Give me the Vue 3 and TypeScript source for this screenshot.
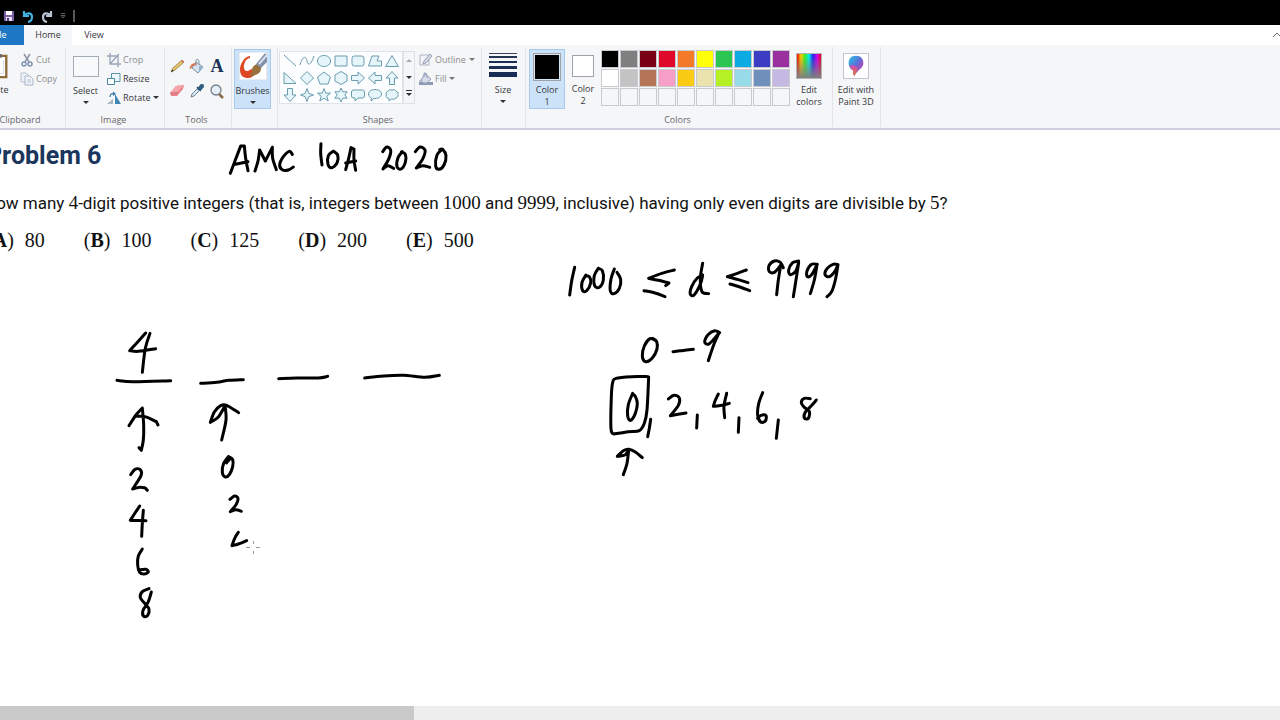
<script setup lang="ts">
import { ref } from 'vue'

interface InkSheet {
  x: number
  y: number
  strokes: string[]
}

const tabs = ['Home', 'View']
const activeTab = ref('Home')
const activeColor = ref(1)

const palette: string[] = [
  '#000000', '#7f7f7f', '#7a0016', '#e0082a', '#f37a28', '#ffff0a', '#2bc552', '#0cabe2', '#3d3dc4', '#9a309f',
  '#ffffff', '#c3c3c3', '#b37556', '#f79fc8', '#f9cb14', '#ebe3ae', '#b4f023', '#98dbe8', '#6f90ba', '#c5b8e3',
  '', '', '', '', '', '', '', '', '', '',
]

const shapes: string[] = [
  'M2 2L14 13',
  'M1 12C4 2 7 3 8 8S12 12 15 3',
  'M8 2.500C12 2.500 14.500 5 14.500 8S12 13.500 8 13.500 1.500 11 1.500 8 4 2.500 8 2.500Z',
  'M2 3H14V13H2Z',
  'M4.500 3H11.500Q14 3 14 5.500V10.500Q14 13 11.500 13H4.500Q2 13 2 10.500V5.500Q2 3 4.500 3Z',
  'M5 3H12L10 8H14.500V13H1.500Z',
  'M8 2.500L14.500 13.500H1.500Z',
  'M2 2.500L14 13.500H2Z',
  'M8 1.500L14.500 8L8 14.500L1.500 8Z',
  'M8 2L14.500 7L12 14H4L1.500 7Z',
  'M8 1.500L14 5V11L8 14.500L2 11V5Z',
  'M1.500 5.500H8V2L14.500 8L8 14V10.500H1.500Z',
  'M14.500 5.500H8V2L1.500 8L8 14V10.500H14.500Z',
  'M5.500 14.500V8H2L8 1.500L14 8H10.500V14.500Z',
  'M5.500 1.500V8H2L8 14.500L14 8H10.500V1.500Z',
  'M8 1.500L9.700 6.300L14.500 8L9.700 9.700L8 14.500L6.300 9.700L1.500 8L6.300 6.300Z',
  'M8 1.500L9.800 6.200H14.500L10.800 9.200L12.200 14L8 11.200L3.800 14L5.200 9.200L1.500 6.200H6.200Z',
  'M8 1L9.800 4.800H14.200L11.800 8L14.200 11.200H9.800L8 15L6.200 11.200H1.800L4.200 8L1.800 4.800H6.200Z',
  'M3.500 3H12.500Q14.500 3 14.500 5V9Q14.500 11 12.500 11H8L5 14V11H3.500Q1.500 11 1.500 9V5Q1.500 3 3.500 3Z',
  'M8 2.500C12 2.500 14.500 4.500 14.500 7S12 11.500 8 11.500L7 11.400L4 14L4.500 11C2.500 10 1.500 9 1.500 7 1.500 4.500 4 2.500 8 2.500Z',
  'M4 4Q5 2 8 3Q11 1.500 12 4Q15 5 14 7.500Q15 10 12 11Q10 13 7.500 12L5 14L5 11.500Q1.500 11 2.200 8Q1 5 4 4Z',
]

/* Pen strokes, three units to a pixel; "|" lifts or turns the pen. */
const ink: InkSheet[] = [
  {
    x: 0, y: 135,
    strokes: [
      '691,115 706,75 722,33|722,33 733,33|733,33 737,70 744,107|706,88 744,80',
      '765,108 774,78 779,45|779,45 796,78|796,78 817,37|817,37 818,70 829,104',
      '877,58 868,49 850,65 839,90 848,105 865,105 880,96',
      '963,26 962,55 966,90',
      '998,50 985,62 984,88 995,98 1011,84 1013,60 1000,48',
      '1037,104 1046,70 1053,38|1053,38 1062,42|1062,42 1062,75 1067,106|1037,84 1067,78',
      '1148,50 1160,36 1172,45 1167,70 1149,102|1149,102 1164,92 1181,100',
      '1207,50 1194,68 1191,95 1203,102 1216,82 1216,58 1204,51',
      '1246,50 1260,36 1275,45 1269,70 1249,99|1249,99 1268,92 1289,97',
      '1326,43 1311,60 1307,93 1317,103 1332,90 1338,62 1328,43 1319,44',
    ],
  },
  {
    x: 480, y: 180,
    strokes: [
      '284,262 275,303 269,345',
      '318,285 306,307 308,332 320,332 332,309 328,290 316,287',
      '355,265 343,287 344,317 358,322 370,300 367,272 355,265',
      '403,267 393,297 391,333 402,341 418,325 422,298 411,277',
      '583,270 545,280 506,295|506,295 535,301 567,309|567,309 557,317|492,332 525,339 555,350',
      '667,288 652,294 635,320 631,343 643,344 662,310 668,285|668,250 661,295 666,335 686,341',
      '799,270 770,281 742,290|742,290 775,299 804,308|750,312 780,321 809,332',
      '910,263 901,247 883,243 867,257 868,275 883,277 902,256|902,256 895,300 890,344',
      '956,243 938,248 926,270 931,284 947,274 956,248|956,248 948,300 940,350',
      '1012,253 995,253 981,273 982,290 995,284 1011,254|1011,254 1003,300 991,341',
      '1074,254 1059,253 1041,266 1035,284 1048,290 1064,275 1074,254|1074,254 1066,300 1055,335 1041,350',
    ],
  },
  {
    x: 100, y: 310,
    strokes: [
      '137,69 115,94 89,122|89,122 115,124 167,116|150,70 136,115 127,187',
      '51,211 100,215 212,212',
      '302,220 350,217 387,211 430,209',
      '536,206 590,204 655,204 683,199',
      '794,204 850,198 910,196 975,202 1018,196',
      '87,347 108,315 127,294|127,294 131,345 130,390 124,421|124,421 117,413|108,319 135,320 169,335|169,335 174,345',
      '331,337 343,306 362,287 380,286 416,308|331,337 355,321 375,287|375,287 378,330 365,390',
    ],
  },
  {
    x: 100, y: 440,
    strokes: [
      '92,104 105,88 121,89 123,107 98,147|98,147 120,142 136,144|136,144 142,151',
      '119,198 105,219 91,241|91,241 138,242|130,211 127,250 125,289',
      '127,327 115,348 113,375 119,397 132,402 145,396 137,388 116,390',
      '147,446 127,455 121,473 136,492 147,507 143,526 131,529 129,511 145,485 154,456',
      '385,50 371,70 367,97 376,111 388,104 398,80 398,59 386,50|379,69 388,59',
      '390,178 404,168 414,176 408,194 391,215|391,215 408,209 424,214',
      '415,277 404,295 396,317|396,317 415,312 440,302',
    ],
  },
  {
    x: 560, y: 310,
    strokes: [
      '284,90 270,86 253,108 247,138 257,155 277,144 291,117 290,95 278,85',
      '339,125 365,122 400,118',
      '479,68 464,62 444,74 434,96 448,101 477,69|477,69 461,105 445,152',
      '265,200 215,200 168,205 158,218 154,260 153,357 162,372|162,372 205,365 238,362 253,340 261,300 266,201',
      '218,250 205,284 203,318 212,331 226,310 232,280 226,259 218,252',
      '272,328 268,355 263,380',
      '325,267 342,256 358,264 355,286 331,317|331,317 378,309|412,315 410,354',
      '475,252 465,273 460,289|460,289 485,286 508,280|500,250 492,288 494,323|537,323 535,367',
      '608,248 596,281 593,315 602,336 616,333 618,317 603,316 593,325|655,330 649,385',
      '751,266 733,265 724,277 732,291 748,304 745,325 733,324 736,307 756,285 769,270',
      '172,439 190,422 207,418 226,426 247,443|172,439 195,435 206,420|206,420 201,460 190,494',
    ],
  },
]

/* Turns a list of pen points into a smooth curve through all of them. */
function smooth(list: string): string {
  return list
    .split('|')
    .map((part) => {
      const p = part.split(' ').map((s) => s.split(',').map(Number))
      let d = `M${p[0][0]} ${p[0][1]}`
      for (let i = 0; i < p.length - 1; i++) {
        const a = p[Math.max(i - 1, 0)]
        const b = p[i]
        const c = p[i + 1]
        const e = p[Math.min(i + 2, p.length - 1)]
        d += `C${b[0] + (c[0] - a[0]) / 6} ${b[1] + (c[1] - a[1]) / 6} ${c[0] - (e[0] - b[0]) / 6} ${c[1] - (e[1] - b[1]) / 6} ${c[0]} ${c[1]}`
      }
      return d
    })
    .join('')
}

const choices = [
  { key: 'A', value: '80' },
  { key: 'B', value: '100' },
  { key: 'C', value: '125' },
  { key: 'D', value: '200' },
  { key: 'E', value: '500' },
]
</script>

<template>
  <div class="app">
    <header class="titlebar">
      <button class="quick" aria-label="Save">
        <svg width="12" height="12" viewBox="0 0 12 12"><path d="M1 1H11V11H1Z" fill="#7d5fa8" /><path d="M3 1H9V5H3Z" fill="#fff" /><path d="M3 7H9V11H3Z" fill="#e6def2" /><path d="M4 8H6V11H4Z" fill="#4b3474" /></svg>
      </button>
      <button class="quick" aria-label="Undo">
        <svg width="12" height="13" viewBox="0 0 12 13"><path d="M2 1V6H7M2.500 5.500C5 2 10 3 10 7C10 9.500 8.500 11.500 6 12" fill="none" stroke="#3fb2e0" stroke-width="2.200" /></svg>
      </button>
      <button class="quick" aria-label="Redo">
        <svg width="12" height="13" viewBox="0 0 12 13"><path d="M10 1V6H5M9.500 5.500C7 2 2 3 2 7C2 9.500 3.500 11.500 6 12" fill="none" stroke="#b9c3d6" stroke-width="2.200" /></svg>
      </button>
      <button class="quick" aria-label="Customize Quick Access Toolbar">
        <svg width="6" height="6" viewBox="0 0 6 6"><path d="M1 .5H5M1 2.500H5L3 5Z" fill="none" stroke="#777" stroke-width=".8" /></svg>
      </button>
      <span class="bar"></span>
    </header>

    <nav class="tabs">
      <button class="file">File</button>
      <button v-for="t in tabs" :key="t" class="tab" :class="{ active: activeTab === t }" @click="activeTab = t">{{ t }}</button>
      <button class="collapse" aria-label="Minimize the Ribbon">
        <svg width="10" height="8" viewBox="0 0 10 8"><path d="M1 6L5 2L9 6" fill="none" stroke="#666" /></svg>
      </button>
    </nav>

    <div class="ribbon">
      <section class="group clipboard">
        <div class="body">
          <button class="big paste">
            <svg width="24" height="26" viewBox="0 0 24 28"><path d="M2 3H22V26H2Z" fill="#fff" stroke="#8d6a38" stroke-width="2.500" /><path d="M7 1H17V5H7Z" fill="#6b6b72" /><path d="M19 8V22H8" fill="none" stroke="#d5d8df" /></svg>
            <span>Paste</span>
          </button>
          <div class="stack">
            <button class="small off">
              <svg width="14" height="14" viewBox="0 0 14 14"><path d="M4 1L9 9M10 1L5 9" stroke="#8b96a8" stroke-width="1.500" /><circle cx="4" cy="11" r="2" fill="none" stroke="#7d90b3" stroke-width="1.500" /><circle cx="10" cy="11" r="2" fill="none" stroke="#7d90b3" stroke-width="1.500" /></svg>
              Cut
            </button>
            <button class="small off">
              <svg width="14" height="14" viewBox="0 0 14 14"><path d="M1 1H6L9 4V10H1Z" fill="#edf1f7" stroke="#b6c1d3" /><path d="M5 4H10L13 7V13H5Z" fill="#f1f4f9" stroke="#a9b6cb" /><path d="M7 8H11M7 10H11" stroke="#b6c1d3" /></svg>
              Copy
            </button>
          </div>
        </div>
        <h2>Clipboard</h2>
      </section>

      <section class="group image">
        <div class="body">
          <button class="big select">
            <span class="marquee"></span>
            <span>Select</span>
            <i class="caret"></i>
          </button>
          <div class="stack">
            <button class="small off">
              <svg width="14" height="14" viewBox="0 0 14 14"><path d="M3 0V11H14M0 3H11V14M3 11L12 1" fill="none" stroke="#9aa5b8" stroke-width="1.300" /></svg>
              Crop
            </button>
            <button class="small">
              <svg width="14" height="14" viewBox="0 0 14 14"><path d="M4.500 1.500H13V9.500H4.500Z" fill="#eef7fb" stroke="#5e93ab" /><path d="M.5 6.500H7.500V12.500H.5Z" fill="#fff" stroke="#4c87a2" /></svg>
              Resize
            </button>
            <button class="small">
              <svg width="14" height="14" viewBox="0 0 14 14"><path d="M8 3V13H14Z" fill="#3f88b4" /><path d="M6 8V13H0Z" fill="#a9b6c3" /><path d="M3 6C3 3 5 2 7 3" fill="none" stroke="#3678a4" stroke-width="1.200" /><path d="M6 .5L9 3L6 5Z" fill="#3678a4" /></svg>
              Rotate<i class="caret"></i>
            </button>
          </div>
        </div>
        <h2>Image</h2>
      </section>

      <section class="group tools">
        <div class="body toolgrid">
          <button aria-label="Pencil">
            <svg width="16" height="16" viewBox="0 0 16 16"><path d="M2 14L4 10L13 2L15 4L6 12Z" fill="#e9c766" stroke="#8c7442" stroke-width=".8" /><path d="M2 14L3.300 11.500L4.700 13Z" fill="#333" /><path d="M12 3L13 2L15 4L14 5Z" fill="#d46c62" /></svg>
          </button>
          <button aria-label="Fill with color">
            <svg width="16" height="16" viewBox="0 0 16 16"><path d="M7 4L14 9L9 15L3 10Z" fill="#d8e3ee" stroke="#7791a8" /><path d="M7 8V2Q9 0 10 3V7" fill="none" stroke="#8196aa" /><path d="M3 10C1 8 1 6 6 5L8 6L4 8Q3 8 2 11Q0 11 1 8Z" fill="#d6734c" /><path d="M10 8L14 9L10 14Z" fill="#8eb4d0" /></svg>
          </button>
          <button aria-label="Text">
            <svg width="16" height="16" viewBox="0 0 16 16"><text x="8" y="14" text-anchor="middle" class="letter">A</text></svg>
          </button>
          <button aria-label="Eraser">
            <svg width="16" height="16" viewBox="0 0 16 16"><path d="M1 10L7 3L15 2L14 6L8 13H2Z" fill="#e88189" /><path d="M1 10L7 3L15 2L9 9Z" fill="#f5a5aa" /><path d="M1 10H8L9 9" fill="none" stroke="#c5636d" stroke-width=".7" /></svg>
          </button>
          <button aria-label="Color picker">
            <svg width="16" height="16" viewBox="0 0 16 16"><path d="M2 14L3 11L9 5L11 7L5 13Z" fill="#dce8f0" stroke="#587b94" stroke-width=".9" /><path d="M8 4L12 8M9 6L12 2Q15 1 14 4L11 7Z" fill="#2e6f9c" stroke="#2b5776" stroke-width="1.500" /></svg>
          </button>
          <button aria-label="Magnifier">
            <svg width="16" height="16" viewBox="0 0 16 16"><path d="M9 10L14 15" stroke="#8d6a45" stroke-width="2.500" /><circle cx="7" cy="7" r="5" fill="#e4eff7" stroke="#76808b" stroke-width="1.300" /></svg>
          </button>
        </div>
        <h2>Tools</h2>
      </section>

      <section class="group brush">
        <div class="body">
          <button class="big chosen">
            <svg class="brushpic" width="28" height="28" viewBox="0 0 28 28"><path d="M0 0H28V28H0Z" fill="#fff" stroke="#d3dbe3" /><path d="M11 4C3 5-2 18 3 24C8 28 15 26 17 20L12 17C8 21 4 19 5 13Q6 7 11 6Z" fill="#de4724" /><path d="M13 20Q12 14 18 12L22 15Q23 22 13 24Q8 26 13 20Z" fill="#99713f" /><path d="M17 12L26 1L28 4V10L22 16Z" fill="#8292aa" /><path d="M20 12L28 3" stroke="#d7dfea" stroke-width="2" /></svg>
            <span>Brushes</span>
            <i class="caret"></i>
          </button>
        </div>
      </section>

      <section class="group shapes">
        <div class="body">
          <div class="gallery">
            <button v-for="(d, i) in shapes" :key="i" :aria-label="'Shape ' + (i + 1)">
              <svg width="16" height="16" viewBox="0 0 16 16"><path :d="d" :fill="i < 2 ? 'none' : '#e6f5f9'" stroke="#6b9cae" stroke-width="1" /></svg>
            </button>
          </div>
          <div class="scroller">
            <button aria-label="Row up"><i class="caret up"></i></button>
            <button aria-label="Row down"><i class="caret"></i></button>
            <button aria-label="More shapes"><i class="caret lined"></i></button>
          </div>
          <div class="stack">
            <button class="small off">
              <svg width="14" height="14" viewBox="0 0 14 14"><path d="M1 2H10V12H1Z" fill="#f4f5f8" stroke="#aab2c2" /><path d="M4 11L5 8L11 1L13 3L7 10Z" fill="#d5dae4" stroke="#98a2b5" /></svg>
              Outline<i class="caret"></i>
            </button>
            <button class="small off">
              <svg width="14" height="14" viewBox="0 0 14 14"><path d="M0 10H14V13H0Z" fill="#8d9bb9" /><path d="M6 2L12 7L8 11H4L2 8Z" fill="#d6dcea" stroke="#909cb4" /><path d="M2 8Q0 8 1 11M5 5V1Q7 0 8 3V6" fill="none" stroke="#909cb4" /></svg>
              Fill<i class="caret"></i>
            </button>
          </div>
        </div>
        <h2>Shapes</h2>
      </section>

      <section class="group size">
        <div class="body">
          <button class="big">
            <svg width="28" height="28" viewBox="0 0 28 28"><path d="M0 2.500H28" stroke="#39465e" /><path d="M0 6H28" stroke="#263755" stroke-width="2" /><path d="M0 11H28" stroke="#1b2f52" stroke-width="2" /><path d="M0 16.500H28" stroke="#1b2f52" stroke-width="3" /><path d="M0 23.500H28" stroke="#162c54" stroke-width="5" /></svg>
            <span>Size</span>
            <i class="caret"></i>
          </button>
        </div>
      </section>

      <section class="group colors">
        <div class="body">
          <button class="big color" :class="{ chosen: activeColor === 1 }" @click="activeColor = 1">
            <span class="well first"></span>
            <span>Color<br>1</span>
          </button>
          <button class="big color" :class="{ chosen: activeColor === 2 }" @click="activeColor = 2">
            <span class="well second"></span>
            <span>Color<br>2</span>
          </button>
          <div class="palette">
            <button v-for="(c, i) in palette" :key="i" :aria-label="c || 'Empty color'" :style="{ backgroundColor: c || '#f5f6f7' }"></button>
          </div>
          <button class="big edit">
            <span class="spectrum"></span>
            <span>Edit<br>colors</span>
          </button>
        </div>
        <h2>Colors</h2>
      </section>

      <section class="group threed">
        <div class="body">
          <button class="big edit">
            <svg class="pin" width="26" height="26" viewBox="0 0 26 26">
              <defs>
                <linearGradient id="drop" x1="0" y1="0" x2="1" y2="1"><stop offset="0" stop-color="#25c5e8" /><stop offset=".45" stop-color="#5874d8" /><stop offset=".75" stop-color="#b344b4" /><stop offset="1" stop-color="#e8503a" /></linearGradient>
                <linearGradient id="tip" x1="0" y1="0" x2="0" y2="1"><stop offset="0" stop-color="#c94bc0" /><stop offset="1" stop-color="#ee7a28" /></linearGradient>
              </defs>
              <path d="M5 10C5 5 8 2 13 2S21 5 21 10C21 15 14 18 11 24Q9 21 10 18Q5 15 5 10Z" fill="url(#drop)" />
              <path d="M6 13Q11 10 15 16L11 24Q9 21 10 18Q7 16 6 13Z" fill="url(#tip)" />
            </svg>
            <span>Edit with<br>Paint 3D</span>
          </button>
        </div>
      </section>
    </div>

    <main class="canvas">
      <article class="problem">
        <h1>Problem 6</h1>
        <p>How many <b>4</b>-digit positive integers (that is, integers between <b>1000</b> and <b>9999</b>, inclusive) having only even digits are divisible by <b>5</b>?</p>
        <ul>
          <li v-for="c in choices" :key="c.key"><span class="key">(<strong>{{ c.key }}</strong>)</span><span>{{ c.value }}</span></li>
        </ul>
      </article>
      <svg class="ink" width="1280" height="576" viewBox="0 130 1280 576" aria-hidden="true">
        <g v-for="(s, i) in ink" :key="i" :transform="`translate(${s.x} ${s.y}) scale(0.33333)`">
          <path v-for="(k, j) in s.strokes" :key="j" :d="smooth(k)" />
        </g>
        <path class="cross" d="M246 547.500H250M256 547.500H260M253.500 541V544M253.500 551V554" />
      </svg>
    </main>

    <footer class="scrollbar"><div class="thumb"></div></footer>
  </div>
</template>

<style>
html,
body,
#app {
  height: 100%;
}
body {
  margin: 0;
  background: #fff;
}
</style>

<style scoped>
.app {
  display: flex;
  flex-direction: column;
  height: 100%;
  overflow: hidden;
  font: 9px/12px 'Open Sans', 'Noto Sans', sans-serif;
  color: #36373c;
}
button {
  font: inherit;
  color: inherit;
  background: none;
  border: 0;
  margin: 0;
  padding: 0;
}
svg {
  display: block;
  flex: none;
}
.titlebar {
  display: flex;
  align-items: center;
  gap: 7px;
  height: 25px;
  padding: 7px 0 0 3px;
  box-sizing: border-box;
  background: #000;
  flex: none;
}
.bar {
  width: 2px;
  height: 12px;
  background: #555;
}
.tabs {
  display: flex;
  height: 20px;
  margin-left: -28px;
  background: #fff;
  flex: none;
}
.file {
  width: 52px;
  padding-left: 3px;
  background: #1e77c5;
  color: #fff;
}
.tab {
  width: 44px;
}
.tab.active {
  width: 48px;
  background: #f5f6f7;
}
.collapse {
  margin: 0 -2px 0 auto;
}
.ribbon {
  display: flex;
  height: 85px;
  padding: 2px 0 1px;
  box-sizing: border-box;
  margin-left: -28px;
  background: #f5f6f7;
  border-bottom: 2px solid #cfd0df;
  flex: none;
}
.group {
  display: flex;
  flex-direction: column;
  flex: none;
  box-sizing: border-box;
  border-right: 1px solid #e3e4e8;
}
.body {
  display: flex;
  flex: 1;
  padding-top: 2px;
}
h2 {
  margin: 0;
  padding-right: 3px;
  font: inherit;
  line-height: 14px;
  text-align: center;
  color: #66676c;
}
.clipboard h2 {
  padding: 0 0 0 3px;
}
.big {
  display: flex;
  flex-direction: column;
  align-items: center;
  flex: none;
  box-sizing: border-box;
  height: 60px;
  padding-top: 4px;
}
.big > span:not([class]) {
  margin-top: 5px;
  white-space: nowrap;
}
.caret {
  display: inline-block;
  border: 3px solid transparent;
  border-top-color: #333;
  border-bottom: 0;
}
.big .caret {
  margin-top: 4px;
}
.small {
  display: flex;
  align-items: center;
  gap: 2px;
  height: 19px;
  white-space: nowrap;
}
.small .caret {
  margin-left: 1px;
}
.off {
  color: #8b8c92;
}
.off .caret {
  border-top-color: #777;
}
.clipboard {
  width: 94px;
}
.paste {
  width: 24px;
  margin: 0 11px 0 13px;
}
.image {
  width: 99px;
}
.select {
  width: 27px;
  margin: 0 8px 0 6px;
}
.marquee {
  width: 24px;
  height: 19px;
  margin: 3px 0;
  border: 1px solid #a3adb8;
  background: #f8f9fb;
}
.tools {
  width: 67px;
}
.toolgrid {
  display: grid;
  grid-template-columns: repeat(3, 20px);
  grid-auto-rows: 25px;
  padding: 6px 0 0 2px;
}
.toolgrid button {
  display: grid;
  place-items: center;
}
.letter {
  font: bold 18px 'Liberation Serif', serif;
  fill: #1b3358;
}
.brush {
  width: 46px;
}
.brush .big {
  width: 37px;
  margin-left: 2px;
  padding-top: 2px;
}
.chosen {
  background: #cce2f8;
  border: 1px solid #a6c9ec;
}
.shapes {
  width: 204px;
}
.gallery {
  display: grid;
  grid-template-columns: repeat(7, 17px);
  grid-auto-rows: 17px;
  flex: none;
  padding: 0 2px;
  height: 51px;
  margin: 3px 0 0 2px;
  background: #fbfdff;
  outline: 1px solid #e0e4ea;
}
.scroller {
  display: flex;
  flex-direction: column;
  flex: none;
  width: 11px;
  height: 51px;
  margin: 3px 5px 0 0;
  outline: 1px solid #dcdfe5;
}
.scroller button {
  flex: 1;
  display: grid;
  place-items: center;
}
.up {
  border: 3px solid transparent;
  border-top: 0;
  border-bottom-color: #aaa;
}
.lined {
  position: relative;
}
.lined::before {
  content: '';
  position: absolute;
  top: -6px;
  left: -3px;
  width: 6px;
  height: 1px;
  background: #333;
}
.stack {
  padding-top: 1px;
}
.size {
  width: 44px;
}
.size .big {
  width: 42px;
  padding-top: 2px;
}
.colors {
  width: 307px;
}
.color {
  width: 36px;
  padding-top: 3px;
}
.color:first-child {
  margin-left: 3px;
}
.well {
  box-sizing: border-box;
  border: 1px solid #9fa3a8;
}
.first {
  width: 28px;
  height: 28px;
  background: #000;
  box-shadow: inset 0 0 0 1px #d8e6f4;
}
.second {
  width: 22px;
  height: 22px;
  margin: 3px 0;
  background: #fff;
}
.big.color > span:last-child {
  margin-top: 3px;
}
.palette {
  display: grid;
  grid-template-columns: repeat(10, 18px);
  grid-auto-rows: 18px;
  gap: 1px;
  align-content: start;
  flex: none;
  height: 56px;
  margin: 1px 6px 0 0;
}
.palette button {
  border: 1px solid #c9cacd;
}
.edit {
  width: 26px;
}
.edit > span:last-child {
  text-align: center;
}
.spectrum {
  flex: none;
  width: 24px;
  height: 24px;
  border: 1px solid #b4b4b4;
  background: linear-gradient(transparent 10%, #808080), linear-gradient(90deg, #e00, #fc0, #3e2, #0ee, #22e, #c0e, #e02);
}
.threed {
  width: 48px;
}
.threed .edit {
  width: 46px;
}
.pin {
  box-sizing: border-box;
  border: 1px solid #c3c5ca;
  background: #fff;
}
.canvas {
  position: relative;
  flex: 1;
  min-height: 0;
  overflow: hidden;
  background: #fff;
}
.problem {
  padding-top: 10px;
  margin-left: -14px;
  color: #111;
  white-space: nowrap;
}
h1 {
  margin: 0;
  font: bold 25px/32px Roboto, sans-serif;
  color: #1b365d;
}
p {
  margin: 19px 0 0 -2px;
  font: 17px/24px Roboto, sans-serif;
}
p b {
  font: 19px/24px 'Liberation Serif', serif;
}
ul {
  display: flex;
  gap: 39px;
  margin: 13px 0 0;
  padding: 0;
  list-style: none;
  font: 20px/24px 'Liberation Serif', serif;
}
.key {
  margin-right: 11px;
}
.ink {
  position: absolute;
  left: 0;
  top: 0;
  fill: none;
  stroke: #000;
  stroke-width: 9;
  stroke-linecap: round;
  stroke-linejoin: round;
}
.cross {
  stroke: #999;
  stroke-width: 1;
  stroke-linecap: butt;
}
.scrollbar {
  height: 14px;
  flex: none;
  background: #eee;
}
.thumb {
  width: 414px;
  height: 100%;
  background: #cacaca;
}
</style>
